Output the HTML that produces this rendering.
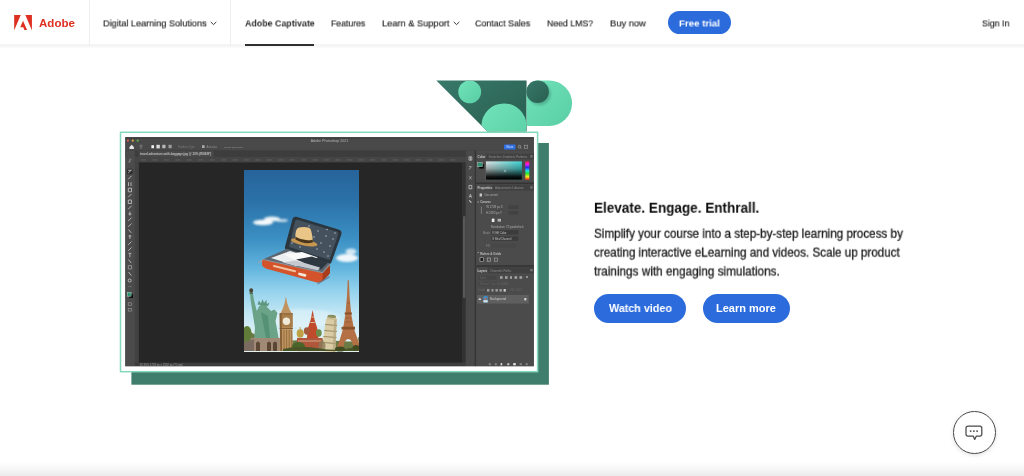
<!DOCTYPE html>
<html lang="en">
<head>
<meta charset="utf-8">
<title>Adobe Captivate</title>
<style>
*{box-sizing:border-box;margin:0;padding:0}
html,body{width:1024px;height:476px;overflow:hidden;background:#fff}
body{font-family:"Liberation Sans",sans-serif;color:#2c2c2c;position:relative}
.t{will-change:transform;position:absolute;white-space:nowrap;transform-origin:0 50%;line-height:1;font-weight:normal;display:block;margin-left:-0.05em}
#hdr{position:absolute;left:0;top:0;width:1024px;height:46px;background:#fff}
#hdr .line{position:absolute;left:0;top:44.300px;width:1024px;height:3.400px;background:linear-gradient(#f4f4f4,#f5f5f5 55%,#fcfcfc)}
.vd{position:absolute;top:0;width:1.6px;height:46px;background:#efefef}
.btn{position:absolute;background:#2c6bdc;border-radius:20px}
#main{position:absolute;left:0;top:46px;width:1024px;height:430px}
#art{position:absolute;left:0;top:0;width:1024px;height:430px}
#chat{position:absolute;left:953px;top:365.2px;width:42.8px;height:42.8px;border-radius:50%;border:1.8px solid #4a4a4a;background:#fff;box-shadow:0 1px 4px rgba(0,0,0,.13)}
#ps text{fill-opacity:.72}
#foot{position:absolute;left:0;bottom:0;width:1024px;height:14px;background:linear-gradient(rgba(240,240,240,0),rgba(238,238,238,.55) 55%,#ebebeb)}
</style>
</head>
<body>
<header id="hdr">
  <div class="line"></div>
  <svg style="position:absolute;left:13.8px;top:15px" width="18.1" height="15.4" viewBox="0 0 30 26"><path fill="#de3022" d="M11.1 0H0v26zM18.9 0H30v26zM15 9.6 22.1 26h-4.6l-2.1-5.2h-5.2z"/></svg>
  <div class="vd" style="left:88.6px"></div>
  <svg style="position:absolute;left:209.6px;top:21.4px" width="7" height="5" viewBox="0 0 7 5"><path d="M.7.9 3.5 3.6 6.3.9" fill="none" stroke="#3a3a3a" stroke-width="1"/></svg>
  <div class="vd" style="left:229.8px"></div>
  <div style="position:absolute;left:245.2px;top:43.7px;width:69px;height:2.2px;background:#2f2f2f"></div>
  <svg style="position:absolute;left:452.6px;top:21.4px" width="7" height="5" viewBox="0 0 7 5"><path d="M.7.9 3.5 3.6 6.3.9" fill="none" stroke="#3a3a3a" stroke-width="1"/></svg>
  <div class="btn" style="left:667.9px;top:11.2px;width:63.4px;height:23px"></div>
<span class="t" id="n0" style="left:39.3px;top:18.25px;font-size:11.4px;color:#de3022;transform:translateY(0.00px) scaleX(1.0142);font-weight:bold">Adobe</span>
<span class="t" id="n1" style="left:103.9px;top:18.07px;font-size:9.6px;color:#2c2c2c;transform:translateY(0.40px) scaleX(0.9519);-webkit-text-stroke:0.2px #2c2c2c">Digital Learning Solutions</span>
<span class="t" id="n2" style="left:245.3px;top:18.07px;font-size:9.6px;color:#2c2c2c;transform:translateY(0.40px) scaleX(0.9215);font-weight:bold">Adobe Captivate</span>
<span class="t" id="n3" style="left:331.9px;top:18.07px;font-size:9.6px;color:#2c2c2c;transform:translateY(0.40px) scaleX(0.9046);-webkit-text-stroke:0.2px #2c2c2c">Features</span>
<span class="t" id="n4" style="left:382.8px;top:18.07px;font-size:9.6px;color:#2c2c2c;transform:translateY(0.40px) scaleX(0.9640);-webkit-text-stroke:0.2px #2c2c2c">Learn &amp; Support</span>
<span class="t" id="n5" style="left:475.8px;top:18.07px;font-size:9.6px;color:#2c2c2c;transform:translateY(0.40px) scaleX(0.9234);-webkit-text-stroke:0.2px #2c2c2c">Contact Sales</span>
<span class="t" id="n6" style="left:547.7px;top:18.07px;font-size:9.6px;color:#2c2c2c;transform:translateY(0.40px) scaleX(0.9090);-webkit-text-stroke:0.2px #2c2c2c">Need LMS?</span>
<span class="t" id="n7" style="left:610.1px;top:18.07px;font-size:9.6px;color:#2c2c2c;transform:translateY(0.40px) scaleX(0.9773);-webkit-text-stroke:0.2px #2c2c2c">Buy now</span>
<span class="t" id="n8" style="left:679.8px;top:18.20px;font-size:9.8px;color:#ffffff;transform:translateY(0.50px) scaleX(0.9852);font-weight:bold">Free trial</span>
<span class="t" id="n9" style="left:982.7px;top:18.07px;font-size:9.6px;color:#2c2c2c;transform:translateY(0.40px) scaleX(0.9192);-webkit-text-stroke:0.2px #2c2c2c">Sign In</span>
</header>
<main id="main">
<svg id="art" viewBox="0 46 1024 430">
<defs>
  <filter id="bl" x="-5%" y="-5%" width="110%" height="110%"><feGaussianBlur stdDeviation="0.5"/></filter>
  <filter id="bl2" x="-20%" y="-20%" width="140%" height="140%"><feGaussianBlur stdDeviation="1.2"/></filter>
  <linearGradient id="gl" x1="0" y1="0" x2="1" y2="1"><stop offset="0" stop-color="#72e3bb"/><stop offset="1" stop-color="#58cda4"/></linearGradient>
  <linearGradient id="gd" x1="0" y1="0" x2="1" y2="1"><stop offset="0" stop-color="#38796a"/><stop offset="1" stop-color="#285e4f"/></linearGradient>
  <clipPath id="tri"><path d="M436.3 80.5H526.6V131.6H487.4z"/></clipPath>
</defs>
<!-- decorative shapes -->
<g id="deco">
  <path d="M436.3 80.5H526.6V131.6H487.4z" fill="url(#gd)"/>
  <g clip-path="url(#tri)">
    <circle cx="469.7" cy="91.9" r="11.4" fill="url(#gl)"/>
    <circle cx="504" cy="126" r="22.6" fill="url(#gl)"/>
  </g>
  <clipPath id="pill"><path d="M537.900 80.500H549.300A22.750 22.750 0 0 1 549.300 126H526.600V91.800A11.300 11.300 0 0 1 537.900 80.500z"/></clipPath>
  <path d="M537.900 80.500H549.300A22.750 22.750 0 0 1 549.300 126H526.600V91.800A11.300 11.300 0 0 1 537.900 80.500z" fill="url(#gl)"/>
  <circle cx="539.600" cy="94" r="11.300" fill="#1f5545" opacity="0.280" filter="url(#bl2)" clip-path="url(#pill)"/>
  <circle cx="537.6" cy="91.7" r="11.3" fill="url(#gd)"/>
</g>
<!-- frame -->
<rect x="131.400" y="143" width="417.500" height="241.700" fill="#3f7d6c"/>
<rect x="120.500" y="132.300" width="417.100" height="239.400" fill="#fff" stroke="#84d8bc" stroke-width="1.500"/>
<g id="ps" filter="url(#bl)" font-family="Liberation Sans, sans-serif">
  <!-- app background -->
  <rect x="125.300" y="137.400" width="408.500" height="228.800" fill="#484848"/>
  <!-- title + options bar -->
  <rect x="125.300" y="137.400" width="408.500" height="13" fill="#4a4a4a"/>
  <rect x="125.300" y="137.400" width="408.500" height="1" fill="#333333"/>
  <circle cx="127.9" cy="140.6" r="1.100" fill="#e2574c"/><circle cx="132.800" cy="140.600" r="1.100" fill="#e0b43a"/><circle cx="137.700" cy="140.600" r="1.100" fill="#58b845"/>
  <text x="329.500" y="142.300" font-size="3.600" fill="#d6d6d6" text-anchor="middle">Adobe Photoshop 2021</text>
  <!-- options bar icons -->
  <g fill="#e6e6e6">
    <path d="M129.500 147 131.700 144.800 133.900 147V149H129.500z"/>
    <path d="M141 144.500V149.200M139.500 146H142.500" stroke="#8d8d8d" stroke-width="0.700" fill="none"/>
    <rect x="151.400" y="145.200" width="2.600" height="3" fill="#f2f2f2"/>
    <rect x="156.400" y="144.800" width="3.400" height="3.600" fill="#dcdcdc"/>
    <rect x="162.300" y="144.800" width="3.200" height="3.400" fill="#b9b9b9"/>
    <rect x="168.500" y="144.800" width="3.200" height="3.400" fill="#9c9c9c"/>
  </g>
  <text x="178" y="148" font-size="2.800" fill="#8f8f8f">Feather:    0 px</text>
  <rect x="202" y="145.200" width="2.600" height="2.800" fill="#a8a8a8"/>
  <text x="206.500" y="148" font-size="2.600" fill="#a5a5a5">Anti-alias</text>
  <text x="224" y="148" font-size="2.500" fill="#b2b2b2">Select and Mask...</text>
  <!-- share btn -->
  <rect x="504" y="144.400" width="11.400" height="5.200" rx="0.800" fill="#2f6fe4"/>
  <text x="509.700" y="148" font-size="2.800" fill="#ffffff" text-anchor="middle">Share</text>
  <circle cx="519.500" cy="146.600" r="1.300" fill="none" stroke="#b4b4b4" stroke-width="0.600"/><path d="M520.400 147.600 521.400 148.800" stroke="#b4b4b4" stroke-width="0.600"/>
  <rect x="524.500" y="145.200" width="3.200" height="3" fill="none" stroke="#9f9f9f" stroke-width="0.600"/>
  <!-- tab bar -->
  <rect x="125.3" y="150.4" width="408.5" height="6.8" fill="#3d3d3d"/>
  <rect x="138.600" y="150.600" width="75" height="6.600" fill="#494949"/>
  <text x="140" y="155.100" font-size="2.950" font-weight="bold" fill="#e4e4e4">travel-adventure-with-baggage.jpg @ 33% (RGB/8*)</text>
  <!-- ruler -->
  <rect x="134.8" y="157.2" width="331" height="5.200" fill="#454545"/>
  <path d="M141 159.800H461" stroke="#6a6a6a" stroke-width="1.200" stroke-dasharray="5 6.450" opacity="0.550"/>
  <!-- canvas -->
  <rect x="138.6" y="162.4" width="324" height="200.4" fill="#272727"/>
  <!-- vertical ruler -->
  <rect x="134.8" y="162.400" width="3.800" height="200.400" fill="#434343"/>
  <!-- left toolbar -->
  <rect x="125.3" y="150.400" width="9.500" height="215.800" fill="#4b4b4b"/>
  <rect x="127" y="168.800" width="5.600" height="5.400" rx="0.800" fill="#2e2e2e"/>
  <g stroke="#cccccc" stroke-width="0.800" fill="none">
    <path d="M128 162.500 131.500 159M129.800 158.500V163" stroke="#8a8a8a"/>
    <path d="M128.200 173 131.400 170M128.200 170.300H131.400"/>
    <path d="M128.200 179.300 131.500 175.800"/>
    <path d="M128.500 182.200V186M131 182.200V186"/>
    <path d="M128.300 188.200H131.500V191.800H128.300z"/>
    <path d="M128.200 197.300 131.400 194"/>
    <path d="M128.300 200H131.400V203.500H128.300z"/>
    <path d="M128.200 209.300 131.500 205.800"/>
    <path d="M129.900 211.500V215.500M128.400 214H131.400"/>
    <path d="M128.200 221 131.500 217.600"/>
    <path d="M128.200 226.800 131.500 223.500"/>
    <path d="M128.500 229.500 131.200 232.800"/>
    <path d="M129.900 235V239M128.500 236H131.300"/>
    <path d="M128.200 244.800 131.500 241.500"/>
    <path d="M128.200 250.800 131.500 247.500"/>
    <path d="M128.500 253.300H131.300M129.900 253.300V257.300"/>
    <path d="M128.500 259.500 131.200 263"/>
    <path d="M128.300 265.500H131.500V269H128.300z" stroke="#9a9a9a"/>
    <path d="M128.500 272 131.300 275.500" />
    <circle cx="129.700" cy="280.500" r="1.500"/>
    <path d="M128.500 286.500H131.500" stroke="#9a9a9a" stroke-dasharray="0.800 0.600"/>
  </g>
  <rect x="129.300" y="294.200" width="3.600" height="3.800" fill="#0c0c0c"/>
  <rect x="127.300" y="292.200" width="3.800" height="4" fill="#2f9576" stroke="#d8d8d8" stroke-width="0.400"/>
  <rect x="128.200" y="302.800" width="3.400" height="2.800" fill="none" stroke="#9b9b9b" stroke-width="0.600"/>
  <rect x="128.200" y="308.300" width="3.400" height="2.800" fill="none" stroke="#9b9b9b" stroke-width="0.600"/>
  <!-- status bar -->
  <rect x="134.800" y="362.800" width="331" height="3.400" fill="#3c3c3c"/>
  <text x="139.500" y="365.600" font-size="2.800" fill="#bdbdbd">33.33%    1728 px x 2592 px (72 ppi)</text>
  <!-- scrollbar -->
  <rect x="462.6" y="162.4" width="3.200" height="200.400" fill="#333333"/>
  <rect x="463" y="216" width="2.400" height="82" rx="1.200" fill="#595959"/>
  <!-- right icon column -->
  <rect x="465.800" y="150.400" width="9" height="215.800" fill="#484848"/>
  <g fill="none" stroke="#c4c4c4" stroke-width="0.800">
    <path d="M469 156.800H471.800V160.200H469zM470.400 157V160"/><path d="M469 169.600 471.800 166.400M469 166.600H471" opacity="0.800"/><path d="M469.200 176.200 471.600 179.400M471.600 176.200 469.200 179.400" opacity="0.700"/><path d="M469 185.400H471.800V188.800H469z"/><path d="M469.200 197.600 470.400 194.200 471.600 197.600M469.600 196.500H471.200" opacity="0.900"/><path d="M469.200 200.300 471.400 202.600" stroke-width="1.100"/>
  </g>
  <rect x="474.800" y="150.400" width="1.400" height="215.800" fill="#353535"/>
  <!-- right panels -->
  <rect x="476.200" y="150.400" width="57.600" height="215.800" fill="#4c4c4c"/>
  <!-- color panel -->
  <rect x="476.200" y="153.600" width="57.600" height="5.800" fill="#404040"/>
  <rect x="476.200" y="153.600" width="9.600" height="5.800" fill="#4c4c4c"/>
  <text x="477.600" y="157.900" font-size="3" font-weight="bold" fill="#f0f0f0">Color</text>
  <text x="488.500" y="157.900" font-size="3" fill="#a9a9a9">Swatches  Gradients  Patterns</text>
  <path d="M530.300 155.800H532.700M530.300 157H532.700" stroke="#bdbdbd" stroke-width="0.500"/>
  <rect x="479.200" y="164" width="4.600" height="4.600" fill="#050505"/>
  <rect x="477.700" y="162.200" width="4.600" height="4.600" fill="#2f8f72" stroke="#cfcfcf" stroke-width="0.400"/>
  <linearGradient id="cf1" x1="0" y1="0" x2="1" y2="0"><stop offset="0" stop-color="#dfe9e9"/><stop offset="1" stop-color="#3fd6d6"/></linearGradient>
  <linearGradient id="cf2" x1="0" y1="0" x2="0" y2="1"><stop offset="0" stop-color="#000" stop-opacity="0"/><stop offset="0.400" stop-color="#000" stop-opacity="0.300"/><stop offset="0.850" stop-color="#000" stop-opacity="0.940"/><stop offset="1" stop-color="#000"/></linearGradient>
  <linearGradient id="hue" x1="0" y1="0" x2="0" y2="1"><stop offset="0" stop-color="#ff1a4a"/><stop offset="0.160" stop-color="#f21cf2"/><stop offset="0.330" stop-color="#2a2af5"/><stop offset="0.500" stop-color="#20d8f0"/><stop offset="0.660" stop-color="#2ae82a"/><stop offset="0.830" stop-color="#f2ee20"/><stop offset="1" stop-color="#f52a1a"/></linearGradient>
  <rect x="485.900" y="161.400" width="36" height="18.400" fill="url(#cf1)"/>
  <rect x="485.900" y="161.400" width="36" height="18.400" fill="url(#cf2)"/>
  <circle cx="505" cy="171" r="0.900" fill="none" stroke="#d8f0f0" stroke-width="0.400"/>
  <rect x="525.300" y="161.400" width="4" height="18.400" fill="url(#hue)"/>
  <rect x="476.200" y="182.400" width="57.600" height="1.600" fill="#353535"/>
  <!-- properties panel -->
  <rect x="476.200" y="184.400" width="57.600" height="6.200" fill="#404040"/>
  <rect x="476.200" y="184.400" width="16" height="6.200" fill="#4c4c4c"/>
  <text x="477.600" y="188.800" font-size="3" font-weight="bold" fill="#f0f0f0">Properties</text>
  <text x="495" y="188.800" font-size="3" fill="#a9a9a9">Adjustments    Libraries</text>
  <path d="M530.300 186.800H532.700M530.300 188H532.700" stroke="#bdbdbd" stroke-width="0.500"/>
  <rect x="479.600" y="193.500" width="2.400" height="3" fill="#c9c9c9"/>
  <text x="484.400" y="196.200" font-size="3" fill="#c6c6c6">Document</text>
  <text x="480.200" y="203.200" font-size="3" font-weight="bold" fill="#e2e2e2">Canvas</text>
  <path d="M477.400 201.600 478.900 201.600 478.150 202.900z" fill="#bdbdbd"/>
  <text x="486.200" y="208.400" font-size="2.900" fill="#d0d0d0">W  1728 px      X</text>
  <text x="486.200" y="214.200" font-size="2.900" fill="#d0d0d0">H   2592 px      Y</text>
  <path d="M481.400 206.500V214" stroke="#9a9a9a" stroke-width="0.600"/>
  <rect x="508.500" y="205.200" width="10" height="3.800" fill="#434343"/><rect x="508.500" y="211" width="10" height="3.800" fill="#434343"/>
  <rect x="491.800" y="218.600" width="2.600" height="3.400" fill="#f0f0f0"/><rect x="497.600" y="218.800" width="3.400" height="2.800" fill="#b5b5b5"/>
  <text x="490.800" y="227.700" font-size="2.900" fill="#cfcfcf">Resolution: 72 pixels/inch</text>
  <text x="482.800" y="233.600" font-size="2.900" fill="#a8a8a8">Mode</text>
  <rect x="491.400" y="230.300" width="27" height="4.200" fill="#3a3a3a"/>
  <text x="492.600" y="233.600" font-size="2.900" fill="#e8e8e8">RGB Color</text>
  <rect x="491.400" y="236.500" width="27" height="4.200" fill="#3a3a3a"/>
  <text x="492.600" y="239.800" font-size="2.900" fill="#e8e8e8">8 Bits/Channel</text>
  <text x="486" y="246.500" font-size="2.900" fill="#9a9a9a">Fill</text>
  <rect x="491.400" y="243.800" width="25" height="3.600" fill="#474747"/>
  <path d="M477.400 252 478.900 252 478.150 253.300z" fill="#bdbdbd"/>
  <text x="480.200" y="254.500" font-size="3" font-weight="bold" fill="#e2e2e2">Rulers &amp; Grids</text>
  <rect x="480" y="257.800" width="3.400" height="3.400" fill="#1c1c1c" stroke="#d5d5d5" stroke-width="0.500"/>
  <rect x="487.200" y="258" width="3.200" height="3.200" fill="none" stroke="#b9b9b9" stroke-width="0.600"/>
  <rect x="494.400" y="258" width="3.200" height="3.200" fill="none" stroke="#a9a9a9" stroke-width="0.600"/>
  <rect x="476.200" y="265.200" width="57.600" height="1.600" fill="#353535"/>
  <!-- layers panel -->
  <rect x="476.200" y="267.200" width="57.600" height="6.200" fill="#404040"/>
  <rect x="476.200" y="267.200" width="12" height="6.200" fill="#4c4c4c"/>
  <text x="477.600" y="271.600" font-size="3" font-weight="bold" fill="#f0f0f0">Layers</text>
  <text x="490" y="271.600" font-size="3" fill="#a9a9a9">Channels     Paths</text>
  <path d="M530.300 269.600H532.700M530.300 270.800H532.700" stroke="#bdbdbd" stroke-width="0.500"/>
  <rect x="478.400" y="275.600" width="18" height="4" fill="#454545"/>
  <text x="480" y="278.700" font-size="2.800" fill="#777777">Kind</text>
  <g fill="#a2a2a2"><rect x="500" y="276.200" width="2.600" height="2.600"/><rect x="505" y="276.200" width="2.600" height="2.600"/><rect x="510" y="276.200" width="2" height="2.600"/><rect x="514.500" y="276.200" width="2.600" height="2.600"/><rect x="519.500" y="276.200" width="2.600" height="2.600"/><circle cx="527" cy="277" r="1.100"/></g>
  <rect x="478.400" y="282.200" width="20" height="4" fill="#464646"/>
  <text x="480" y="285.300" font-size="2.800" fill="#6f6f6f">Normal           Opacity: 100%</text>
  <text x="478.600" y="291.400" font-size="2.800" fill="#777777">Lock:</text>
  <g fill="#9a9a9a"><rect x="487" y="289" width="2.400" height="2.600"/><rect x="491.500" y="289" width="2" height="2.600"/><rect x="495.500" y="289" width="2.400" height="2.600"/><rect x="499.500" y="289" width="2.400" height="2.600"/><rect x="503.600" y="289" width="2.200" height="2.600" fill="#cfcfcf"/></g>
  <text x="510" y="291.400" font-size="2.800" fill="#6a6a6a">Fill: 100%</text>
  <rect x="477.200" y="295" width="51.600" height="8.600" fill="#5e5e5e"/>
  <ellipse cx="479.800" cy="299.200" rx="1.300" ry="0.900" fill="#d0d0d0"/>
  <rect x="483.400" y="296.200" width="4.300" height="6.200" fill="#3f8fc8"/><rect x="483.400" y="300.200" width="4.300" height="2.200" fill="#d6e3e6"/><rect x="484.600" y="298.300" width="2" height="1.500" fill="#d05a30"/>
  <text x="490" y="300.300" font-size="3" fill="#f0f0f0">Background</text>
  <rect x="524.200" y="298" width="2.200" height="2.400" fill="#cfcfcf"/>
  <g fill="#858585"><rect x="488.800" y="363.200" width="2" height="2"/><rect x="494.800" y="363.200" width="2" height="2"/><rect x="500.600" y="363.100" width="1.600" height="2.200" fill="#dddddd"/><rect x="507.200" y="363.200" width="2.200" height="2" fill="#bdbdbd"/><rect x="513.200" y="363.100" width="2.600" height="2.200" fill="#e2e2e2"/><rect x="519.700" y="363.200" width="2.200" height="2"/><rect x="525.700" y="363.200" width="2" height="2"/></g>
</g>
<g id="photo">
  <defs>
    <linearGradient id="sky" x1="0" y1="0" x2="0" y2="1">
      <stop offset="0" stop-color="#26639a"/><stop offset="0.18" stop-color="#2b72a9"/><stop offset="0.38" stop-color="#3b8fc3"/><stop offset="0.54" stop-color="#62b5de"/><stop offset="0.66" stop-color="#92d1ed"/><stop offset="0.78" stop-color="#bfe5f4"/><stop offset="0.9" stop-color="#dcf0f5"/><stop offset="1" stop-color="#e6f2f0"/>
    </linearGradient>
    <clipPath id="pc"><rect x="244.100" y="170" width="114.100" height="181.100"/></clipPath>
    <filter id="pb" x="-5%" y="-5%" width="110%" height="110%"><feGaussianBlur stdDeviation="0.5"/></filter>
    <filter id="cb" x="-30%" y="-60%" width="160%" height="220%"><feGaussianBlur stdDeviation="1.3"/></filter>
  </defs>
  <g clip-path="url(#pc)">
    <rect x="243" y="169" width="116" height="183" fill="url(#sky)"/>
    <!-- clouds -->
    <g filter="url(#cb)" fill="#ffffff">
      <ellipse cx="263" cy="222.500" rx="10" ry="2.800" opacity="0.95"/>
      <ellipse cx="272" cy="219" rx="8" ry="2.400" opacity="0.9"/>
      <ellipse cx="282" cy="220.500" rx="6" ry="1.600" opacity="0.7"/>
      <ellipse cx="347" cy="258" rx="11" ry="4" opacity="0.9"/>
      <ellipse cx="351" cy="251.500" rx="5.500" ry="3" opacity="0.75"/>
      <ellipse cx="300" cy="318" rx="40" ry="9" opacity="0.3"/>
    </g>
    <g filter="url(#pb)">
      <!-- suitcase lid -->
      <path d="M296.500 216.800 338.500 229.600Q342.500 231 341.300 234.500L331.600 262Q330.300 264.800 327 264L287 250.500Q284 249.300 285.200 246L292.500 219Q293.600 216 296.500 216.800z" fill="#2b353d"/>
      <path d="M297.500 219.800 337 231.700Q338.800 232.500 338.300 234.200L329.600 260 289 247 295 221.200Q295.600 219.200 297.500 219.800z" fill="#44515c"/>
      <g fill="#d3dbe0" opacity="0.8"><circle cx="318" cy="231" r="0.750"/><circle cx="326" cy="236" r="0.750"/><circle cx="321" cy="243" r="0.750"/><circle cx="330" cy="246" r="0.750"/><circle cx="314" cy="237" r="0.750"/><circle cx="324" cy="252" r="0.750"/><circle cx="333" cy="239" r="0.750"/><circle cx="317" cy="249" r="0.750"/><circle cx="309" cy="226" r="0.750"/><circle cx="327" cy="229.500" r="0.750"/><circle cx="300" cy="247" r="0.750"/><circle cx="292" cy="243" r="0.750"/><circle cx="328" cy="256" r="0.750"/><circle cx="335" cy="233" r="0.750"/></g>
      <!-- suitcase base interior + clothes -->
      <path d="M262.500 259.500 287 248.800 330 263.500 322.500 272.800z" fill="#5b6670"/>
      <path d="M271 258 290 251 312 258 296 266z" fill="#eceef0"/>
      <path d="M284 254.500 302 252 318 257.500 300 262z" fill="#fafafa"/>
      <path d="M296 259.500 312 256.500 328 262.500 321 269.500z" fill="#2f3740"/>
      <path d="M282 262.500 296 260.500 320 267.500 318 270.500z" fill="#c5cad0"/>
      <!-- suitcase base front -->
      <path d="M262.300 259.300 322.500 272.600 329.800 264.300 330 271.500Q330 273.500 328.500 275L322.500 281Q320 283 316 282.200L266.500 268.800Q262.800 267.600 262 265z" fill="#d4532a"/>
      <path d="M322.500 272.600 329.800 264.300 330 271.500Q330 273.500 328.500 275L322.500 281z" fill="#a83c1c"/>
      <path d="M262.300 259.300 322.500 272.600 329.800 264.300" fill="none" stroke="#8b949c" stroke-width="1.100"/>
      <path d="M274 266 295 271.200" stroke="#f0c4a3" stroke-width="2.100" stroke-linecap="round"/>
      <path d="M299.500 274 305 275.400" stroke="#f6e6d8" stroke-width="2.800" stroke-linecap="round"/>
      <path d="M262 260.500 258.500 262.500" stroke="#9aa3ab" stroke-width="1.300" stroke-linecap="round"/>
      <path d="M318 283.500 329 277" stroke="#54697c" stroke-width="1.600" stroke-linecap="round" opacity="0.600"/>
      <!-- hat -->
      <ellipse cx="304.200" cy="242.400" rx="13.400" ry="3.200" transform="rotate(11 304.200 242.400)" fill="#c79650"/>
      <path d="M295.600 239.200Q294.400 229.200 299 227.600Q303.500 226.200 309.200 227.700Q312.200 229.400 312.800 242.200Q304 244.600 295.600 239.200z" fill="#e9c688"/>
      <path d="M295.400 236.800Q304 241.900 312.700 239.700L312.900 242.600Q304 244.900 295.400 239.600z" fill="#4a351c"/>
    </g>
    <g filter="url(#pb)">
      <!-- far trees -->
      <path d="M244 333Q247 327 250 331T256 334 262 338 300 340 322 338 340 341 358.200 337V351.100H244z" fill="#6b7a45"/>
      <ellipse cx="247" cy="333" rx="4.500" ry="7" fill="#5f7d38"/>
      <!-- statue of liberty -->
      <path d="M250 293 252.800 293 254 300 256.800 311 259 306.500 262 303.500 265 303.800 267.500 307.500 271 311 274.500 309.500 277.500 313 275.500 321 277.500 332 279 340H254L255 328 252.800 314 250.600 300z" fill="#6aa388"/>
      <path d="M261 312 266 338 270 338 268 316z" fill="#4d8a6e" opacity="0.700"/>
      <path d="M257.500 304.500 259 300.500 260.800 303.500 262.600 299.300 264 303 266.400 299.800 266.800 304 269.600 302.500 268 306z" fill="#5c957c"/>
      <ellipse cx="251.200" cy="290.600" rx="1.900" ry="2.300" fill="#4a4330"/>
      <path d="M249.500 292.500H253V294H249.500z" fill="#566a52"/>
      <!-- pedestal -->
      <path d="M251 338 281 338 282 351.100H248.500z" fill="#a08a74"/>
      <path d="M256 343Q258 340 260 343V351H256zM267 343Q269 340 271 343V351H267zM273 343Q275 340 277 343V351H273z" fill="#5b4634"/>
      <path d="M244 343 254 339 254 351.100H244z" fill="#7a6a5e"/>
      <!-- big ben -->
      <path d="M285.900 296.500 287.200 303 289.300 309 291.800 313.500 293 351.100H279.600L280.300 313.500 282.600 309 284.600 303z" fill="#bf9460"/>
      <path d="M279.800 314H292.800V327.500H279.800z" fill="#a97d49"/>
      <circle cx="286.400" cy="321.300" r="3.700" fill="#f0e9d8"/>
      <path d="M279.600 313.800H293M279.600 328.500H293" stroke="#7d5a32" stroke-width="0.900"/>
      <path d="M281.300 330V351M284 330V351M286.600 330V351M289.200 330V351M291.700 330V351" stroke="#8a6538" stroke-width="0.800"/>
      <path d="M279.500 313.500 280.300 351.100 282 351.100 281.500 313.500z" fill="#7a5630" opacity="0.800"/>
      <!-- st basil -->
      <path d="M312.600 310 314.600 320 317.200 328 319.800 351.100H305.500L308 328 310.600 320z" fill="#bf4b2c"/>
      <path d="M311.400 317H313.800M310.400 322.500H314.800" stroke="#e7d9c4" stroke-width="0.800"/>
      <ellipse cx="300.200" cy="333.500" rx="3.500" ry="4.200" fill="#bfa045"/>
      <path d="M300.200 327 300.200 330" stroke="#bfa045" stroke-width="0.800"/>
      <ellipse cx="306.800" cy="331" rx="2.900" ry="3.700" fill="#a35a3a"/>
      <ellipse cx="318.800" cy="333" rx="2.900" ry="3.700" fill="#6c8c4a"/>
      <path d="M297 338H322.500V351.100H297z" fill="#b0573b"/>
      <path d="M298 341H321.500" stroke="#e0c9b0" stroke-width="0.700"/>
      <ellipse cx="298.500" cy="346.500" rx="6.500" ry="4.600" fill="#4a662c"/>
      <!-- pisa -->
      <g transform="rotate(5 329 350)">
        <path d="M323.300 319.500 334 318.300 335.600 352H321.800z" fill="#dacca4"/>
        <path d="M322.900 325H335M322.600 331H335.300M322.300 337H335.500M322 343H335.700" stroke="#9a8c66" stroke-width="1"/>
        <path d="M331.500 318.500 334 318.300 335.600 352H332.800z" fill="#b1a27a" opacity="0.700"/>
        <path d="M324.300 316.300H333.200V319.500H324.300z" fill="#cbbd94"/>
        <ellipse cx="328.800" cy="316.200" rx="4.300" ry="1.500" fill="#8c8f5e"/>
      </g>
      <ellipse cx="322" cy="346" rx="3.500" ry="5" fill="#8a7c5a" opacity="0.8"/>
      <!-- eiffel -->
      <path d="M347.700 280.200 348.900 280.200 349.600 296 351.200 314 354 329 359 343V351.100H353.600Q353 339 348.300 339Q343.600 339 343 351.100H335.400L340 339 343 329 345.400 314 347 296z" fill="#b37144"/>
      <path d="M341.600 326.800H355V329.400H341.600zM344.700 312.500H351.900V314.400H344.700z" fill="#8a532b"/>
      <path d="M346 318 350.600 318M345.500 322 351.100 322M347 303H349.600" stroke="#8a532b" stroke-width="0.600"/>
      <!-- ground -->
      <path d="M283 349Q300 345 320 348.500T358.200 346V351.100H283z" fill="#4a5526"/>
      <ellipse cx="340" cy="349" rx="5" ry="2.600" fill="#3f4c22"/>
      <ellipse cx="356" cy="348" rx="3.500" ry="3" fill="#3f4c22"/>
    </g>
  </g>
</g>

</svg>
<div class="btn" style="left:594px;top:248px;width:91.5px;height:28.6px"></div>
<div class="btn" style="left:702.5px;top:248px;width:87.7px;height:28.6px"></div>
<h1 class="t" id="h1" style="left:595.1px;top:154.85px;font-size:14.0px;color:#0d0d0d;transform:translateY(-0.30px) scaleX(0.9657);font-weight:bold">Elevate. Engage. Enthrall.</h1>
<span class="t" id="p1" style="left:595.1px;top:181.06px;font-size:12.8px;color:#1c1c1c;transform:translateY(0.70px) scaleX(0.9123);-webkit-text-stroke:0.3px #1c1c1c">Simplify your course into a step-by-step learning process by</span>
<span class="t" id="p2" style="left:595.1px;top:200.36px;font-size:12.8px;color:#1c1c1c;transform:translateY(0.60px) scaleX(0.9084);-webkit-text-stroke:0.3px #1c1c1c">creating interactive eLearning and videos. Scale up product</span>
<span class="t" id="p3" style="left:595.1px;top:219.26px;font-size:12.8px;color:#1c1c1c;transform:translateY(0.50px) scaleX(0.9196);-webkit-text-stroke:0.3px #1c1c1c">trainings with engaging simulations.</span>
<span class="t" id="b1" style="left:609.1px;top:256.59px;font-size:11.0px;color:#ffffff;transform:translateY(0.00px) scaleX(0.9769);font-weight:bold">Watch video</span>
<span class="t" id="b2" style="left:716.9px;top:256.59px;font-size:11.0px;color:#ffffff;transform:translateY(0.00px) scaleX(0.9963);font-weight:bold">Learn more</span>
<div id="chat">
  <svg style="position:absolute;left:10.9px;top:13px" width="18" height="16" viewBox="0 0 18 16"><path d="M2.800 1.200h12.200A1.800 1.800 0 0 1 16.800 3v6.200A1.800 1.800 0 0 1 15 11H11.400L9.700 14.400 8.200 11H2.800A1.800 1.800 0 0 1 1 9.200V3A1.800 1.800 0 0 1 2.800 1.200z" fill="none" stroke="#4a4a4a" stroke-width="1.250" stroke-linejoin="round"/><circle cx="5.700" cy="6.100" r="0.950" fill="#4a4a4a"/><circle cx="8.900" cy="6.100" r="0.950" fill="#4a4a4a"/><circle cx="12.100" cy="6.100" r="0.950" fill="#4a4a4a"/></svg>
</div>
<div id="foot"></div>
</main>
</body>
</html>
